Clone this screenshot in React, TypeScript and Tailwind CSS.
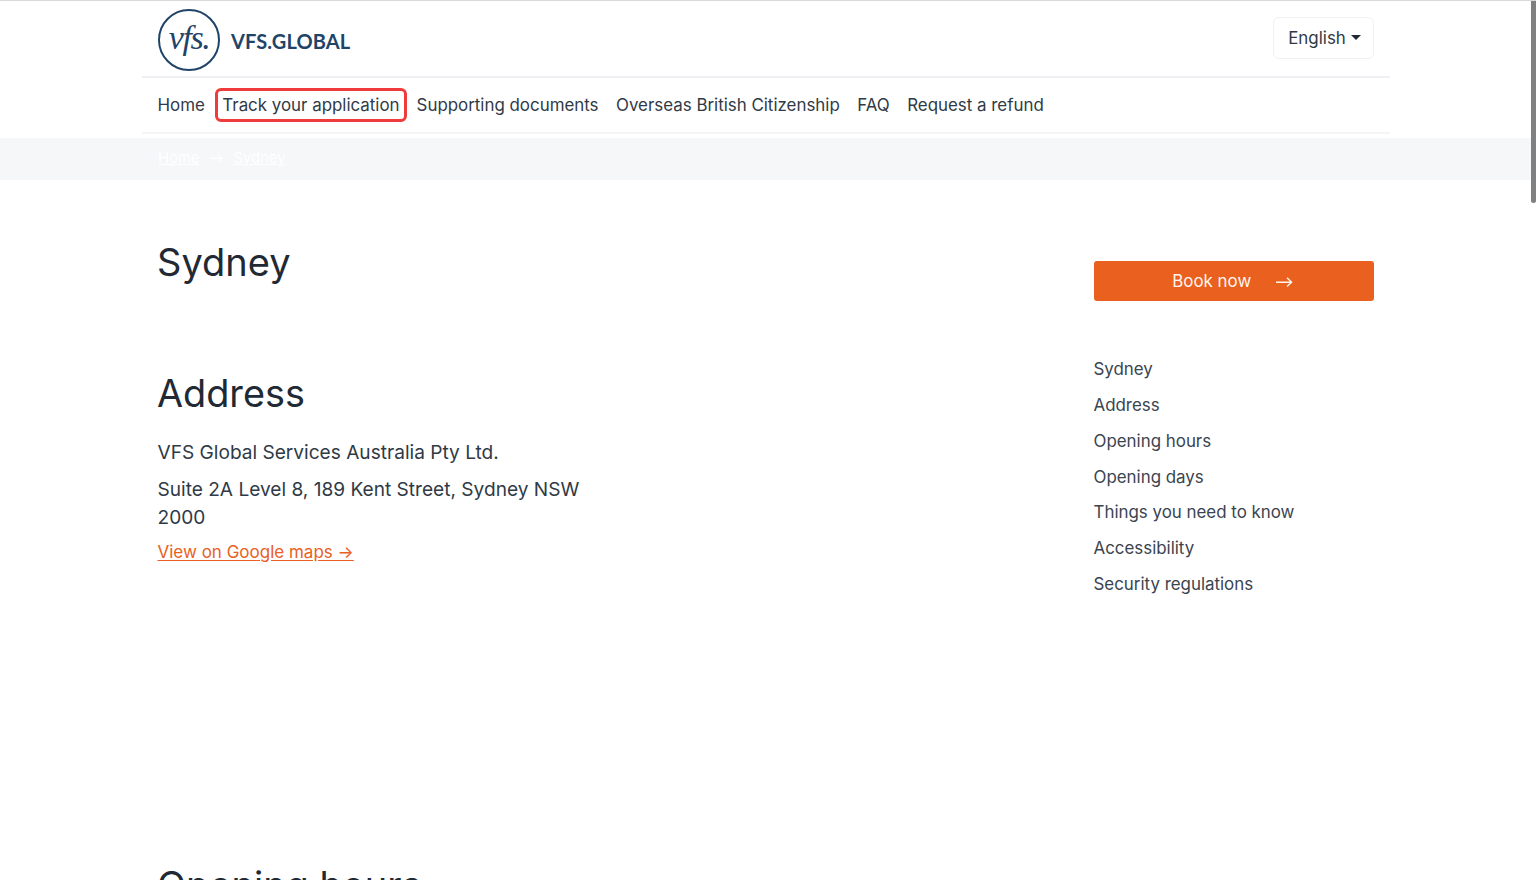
const navItems = [
  "Home",
  "Track your application",
  "Supporting documents",
  "Overseas British Citizenship",
  "FAQ",
  "Request a refund",
];

const sideLinks = [
  "Sydney",
  "Address",
  "Opening hours",
  "Opening days",
  "Things you need to know",
  "Accessibility",
  "Security regulations",
];

function ArrowRight({ className }: { className?: string }) {
  return (
    <svg viewBox="0 0 18 12" fill="none" stroke="currentColor" strokeWidth="1.4" className={className}>
      <path d="M1 6.2h15.5M12 1.8l4.6 4.4-4.6 4.2" />
    </svg>
  );
}

function Logo() {
  return (
    <div className="flex items-center gap-[11px]">
      <div className="flex h-[62px] w-[62px] items-center justify-center rounded-full border-2 border-[#1f4468] pb-1 font-['Liberation_Serif',serif] text-[34px] italic leading-none tracking-[-1.5px] text-[#1f4468]">
        vfs.
      </div>
      <span className="pt-[1px] font-['Lato',sans-serif] text-[20px] font-bold tracking-[0.1px] text-[#1f4468]">
        VFS.GLOBAL
      </span>
    </div>
  );
}

export default function App() {
  return (
    <div className="relative h-[880px] overflow-hidden border-t border-[#d9d9d9] bg-white font-['Inter',sans-serif] text-[#212934]">
      <div className="absolute right-0 top-0 h-[202px] w-[5px] rounded-b-sm bg-[#808080]" />

      <header className="ml-[142px] w-[1248px]">
        <div className="flex h-[77px] items-start justify-between border-b-2 border-[#eef0f4] px-4 pt-2">
          <Logo />
          <button className="mt-[8px] flex h-[42px] w-[101px] items-center justify-center gap-[5px] rounded-md border border-[#f0f1f3] pt-[2px] pl-[2px] text-[16.9px] text-[#2f3a46]">
            English
            <span className="mb-1 h-0 w-0 border-x-[5px] border-t-[5px] border-x-transparent border-t-[#212934]" />
          </button>
        </div>
        <nav className="flex h-[56px] items-center border-b-2 border-[#f4f5f7] pl-[15.5px] text-[16.9px] text-[#2f3a46]">
          {navItems.map((item) =>
            item === "Track your application" ? (
              <a
                key={item}
                className="-ml-[7px] mr-[10px] flex h-[34px] items-center rounded-md border-[3px] border-[#ee3b3b] px-[4px] pt-[2px]"
              >
                {item}
              </a>
            ) : (
              <a key={item} className="mr-[17.5px] pt-[2px] last:mr-0">
                {item}
              </a>
            ),
          )}
        </nav>
      </header>

      <div className="mt-[4px] h-[42px] bg-[#f6f7f9]">
        <div className="ml-[158px] flex h-full items-center gap-[10px] pb-[2px] text-[14.8px] text-white">
          <span className="underline">Home</span>
          <ArrowRight className="h-[10px] w-[14px]" />
          <span className="underline">Sydney</span>
        </div>
      </div>

      <main className="ml-[157.5px] mt-[59px] flex w-[1216.5px] items-start justify-between">
        <div className="w-[440px]">
          <h1 className="text-[38px] leading-[46px] text-[#212934] -ml-[0.5px]">Sydney</h1>
          <h2 className="mt-[85px] text-[37.8px] leading-[46px] -ml-[0.5px]">Address</h2>
          <p className="mt-[22px] text-[19.1px] leading-[28px] text-[#2f3a46]">
            VFS Global Services Australia Pty Ltd.
          </p>
          <p className="mt-[9px] text-[19.1px] leading-[28px] text-[#2f3a46]">
            Suite 2A Level 8, 189 Kent Street, Sydney NSW 2000
          </p>
          <a className="mt-[9px] block text-[17px] leading-[24px] text-[#e9601f] underline underline-offset-2">
            View on Google maps →
          </a>
          <h2 className="mt-[298px] text-[38px] leading-[46px] -ml-[0.5px]">Opening hours</h2>
        </div>

        <aside className="mt-[22px] w-[280.5px]">
          <button className="flex h-[40px] w-full items-center justify-center gap-[24px] rounded-[3px] bg-[#e9601f] pt-[2px] pr-[2px] text-[16.9px] text-[#fff5ee]">
            Book now
            <ArrowRight className="h-[12px] w-[18px]" />
          </button>
          <ul className="mt-[56px] flex flex-col gap-[11.85px] text-[16.9px] leading-[24px] text-[#3a444f]">
            {sideLinks.map((link) => (
              <li key={link}>{link}</li>
            ))}
          </ul>
        </aside>
      </main>
    </div>
  );
}
